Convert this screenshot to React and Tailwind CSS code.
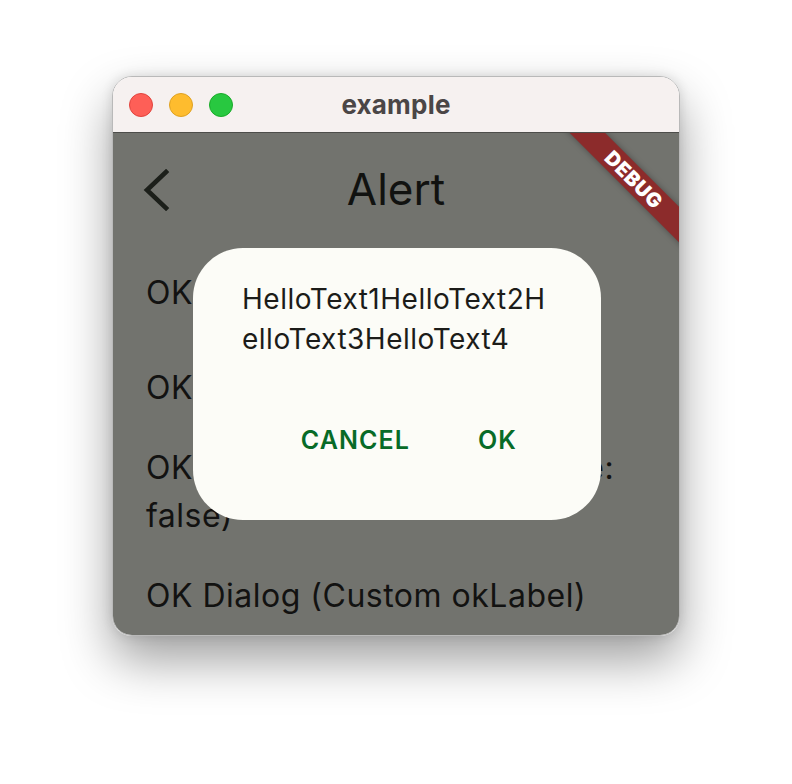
import React from 'react';

const rows = [
  { id: 'ok', lines: ['OK Dialog'], cls: 'pt-6 pb-[31px]' },
  { id: 'ok-cancel', lines: ['OK Cancel Dialog'], cls: 'py-4' },
  { id: 'ok-barrier', lines: ['OK Dialog (barrierDismissible:', 'false)'], cls: 'py-4' },
  { id: 'ok-label', lines: ['OK Dialog (Custom okLabel)'], cls: 'py-4' },
];

// macOS traffic lights
const TrafficLights = () => (
  <div className="flex items-center gap-4 pl-4">
    <span className="block w-6 h-6 rounded-full bg-[#fe5f57] border border-[#e0443e]" />
    <span className="block w-6 h-6 rounded-full bg-[#febc2e] border border-[#dea123]" />
    <span className="block w-6 h-6 rounded-full bg-[#28c840] border border-[#1aab29]" />
  </div>
);

const BackChevron = () => (
  <svg width="28" height="42" viewBox="0 0 28 42" fill="none">
    <polyline points="23,3 4,21 23,39" stroke="#1c1f1a" strokeWidth="4.6" strokeLinecap="square" strokeLinejoin="miter" />
  </svg>
);

const App = () => {
  return (
    <div className="w-[792px] h-[784px] bg-white pt-[76px] pl-[112px] font-['Inter',sans-serif]">
      <div className="w-[568px] h-[560px] rounded-[20px] overflow-hidden flex flex-col border border-[#b9b9b9] shadow-[0_24px_50px_rgba(0,0,0,0.38),0_0_12px_rgba(0,0,0,0.12)]">
        {/* Title bar */}
        <div className="relative h-[56px] shrink-0 bg-[#f6f1f0] border-b border-[#4d4d4a] flex items-center">
          <TrafficLights />
          <div className="absolute inset-0 flex items-center justify-center text-[26px] font-bold text-[#4b4646] tracking-[0.2px] pointer-events-none">
            example
          </div>
        </div>

        {/* Scrimmed app body */}
        <div className="relative flex-1 bg-[#72736e] overflow-hidden">
          <div className="relative h-[112px] flex items-center">
            <div className="pl-[30px] pt-[2px]">
              <BackChevron />
            </div>
            <div className="absolute inset-0 flex items-center justify-center text-[44px] text-[#111210] leading-none">
              Alert
            </div>
          </div>

          <div className="pl-[33px] text-[32px] leading-[48px] text-[#121211] tracking-[0.5px]">
            {rows.map((row) => (
              <div key={row.id} className={row.cls}>
                {row.lines.map((line) => (
                  <div key={line} className="whitespace-nowrap">{line}</div>
                ))}
              </div>
            ))}
          </div>

          {/* Alert dialog */}
          <div className="absolute left-[80px] top-[115px] w-[408px] h-[272px] rounded-[50px] bg-[#fcfcf7] flex flex-col">
            <div className="pl-[49px] pt-[31px] text-[28px] leading-[40px] text-[#1c1c19] tracking-[0.5px]">
              <div>HelloText1HelloText2H</div>
              <div>elloText3HelloText4</div>
            </div>
            <div className="mt-[61px] flex justify-end gap-[68px] pr-[84px] text-[25px] leading-[40px] font-semibold text-[#086b27] tracking-[1.1px]">
              <span>CANCEL</span>
              <span>OK</span>
            </div>
          </div>

          {/* Debug ribbon */}
          <div className="absolute left-[421px] top-[34px] w-[200px] h-[25px] rotate-45 bg-[#8c2b2b] shadow-[0_0_6px_rgba(0,0,0,0.35)] flex items-center justify-center">
            <span className="text-white text-[20px] font-black leading-none tracking-[0.5px]">DEBUG</span>
          </div>
        </div>
      </div>
    </div>
  );
};

export default App;
